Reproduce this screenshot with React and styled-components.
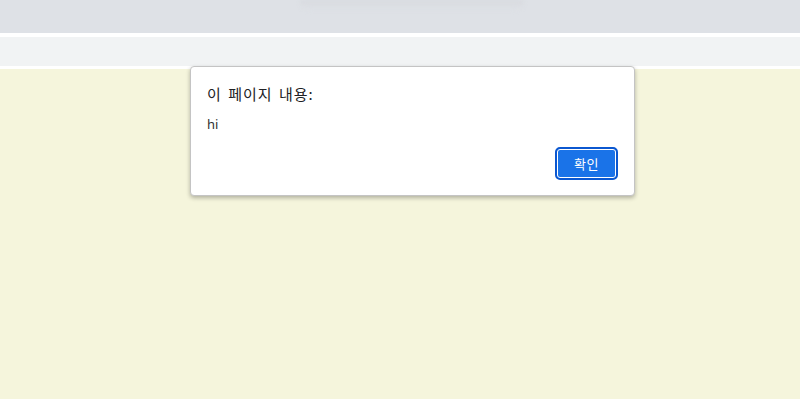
import React from 'react';
import styled, { createGlobalStyle } from 'styled-components';

const GlobalStyle = createGlobalStyle`
  html, body, #root {
    margin: 0;
    height: 100%;
  }
  body {
    font-family: 'Noto Sans', 'Noto Sans CJK KR', sans-serif;
    overflow: hidden;
  }
`;

const Screen = styled.div`
  position: relative;
  display: flex;
  flex-direction: column;
  height: 100%;
  background: #fff;
`;

const TabStrip = styled.div`
  display: flex;
  height: 33px;
  background: #dee1e6;
  border-bottom: 4px solid #fff;
`;

const TabGlow = styled.div`
  width: 224px;
  height: 10px;
  margin-left: 300px;
  border-radius: 0 0 40px 40px;
  background: linear-gradient(#d7d9de, #dee1e6);
  filter: blur(2px);
`;

const AddressBar = styled.div`
  height: 29px;
  background: #f1f3f4;
  border-bottom: 3px solid #fff;
`;

const Page = styled.main`
  flex: 1;
  background: #f5f5dc;
`;

const Dialog = styled.div`
  position: absolute;
  top: 66px;
  left: 190px;
  width: 445px;
  box-sizing: border-box;
  display: flex;
  flex-direction: column;
  padding: 17px 16px 15px 16px;
  background: #fff;
  border: 1px solid #c4c4c4;
  border-radius: 4px;
  box-shadow: 0 2px 4px rgba(0, 0, 0, 0.28);
`;

const Title = styled.div`
  font-family: 'Noto Sans CJK KR', sans-serif;
  font-size: 15px;
  line-height: 20px;
  letter-spacing: 1px;
  word-spacing: 2px;
  color: #202124;
`;

const Message = styled.div`
  margin-top: 12px;
  font-size: 13px;
  line-height: 16px;
  color: #303134;
`;

const Actions = styled.div`
  display: flex;
  justify-content: flex-end;
  margin-top: 15px;
`;

const Button = styled.button`
  width: 63px;
  height: 33px;
  box-sizing: border-box;
  border: 2px solid #0b57d0;
  border-radius: 5px;
  padding: 0;
  background: #1a73e8;
  box-shadow: inset 0 0 0 1px #fff;
  color: #fff;
  font-family: 'Noto Sans CJK KR', sans-serif;
  font-size: 13px;
  font-weight: 400;
  letter-spacing: 0.5px;
  cursor: pointer;
`;

const App = () => (
  <>
    <GlobalStyle />
    <Screen>
      <TabStrip>
        <TabGlow />
      </TabStrip>
      <AddressBar />
      <Page />
      <Dialog role="alertdialog">
        <Title>이 페이지 내용:</Title>
        <Message>hi</Message>
        <Actions>
          <Button>확인</Button>
        </Actions>
      </Dialog>
    </Screen>
  </>
);

export default App;
